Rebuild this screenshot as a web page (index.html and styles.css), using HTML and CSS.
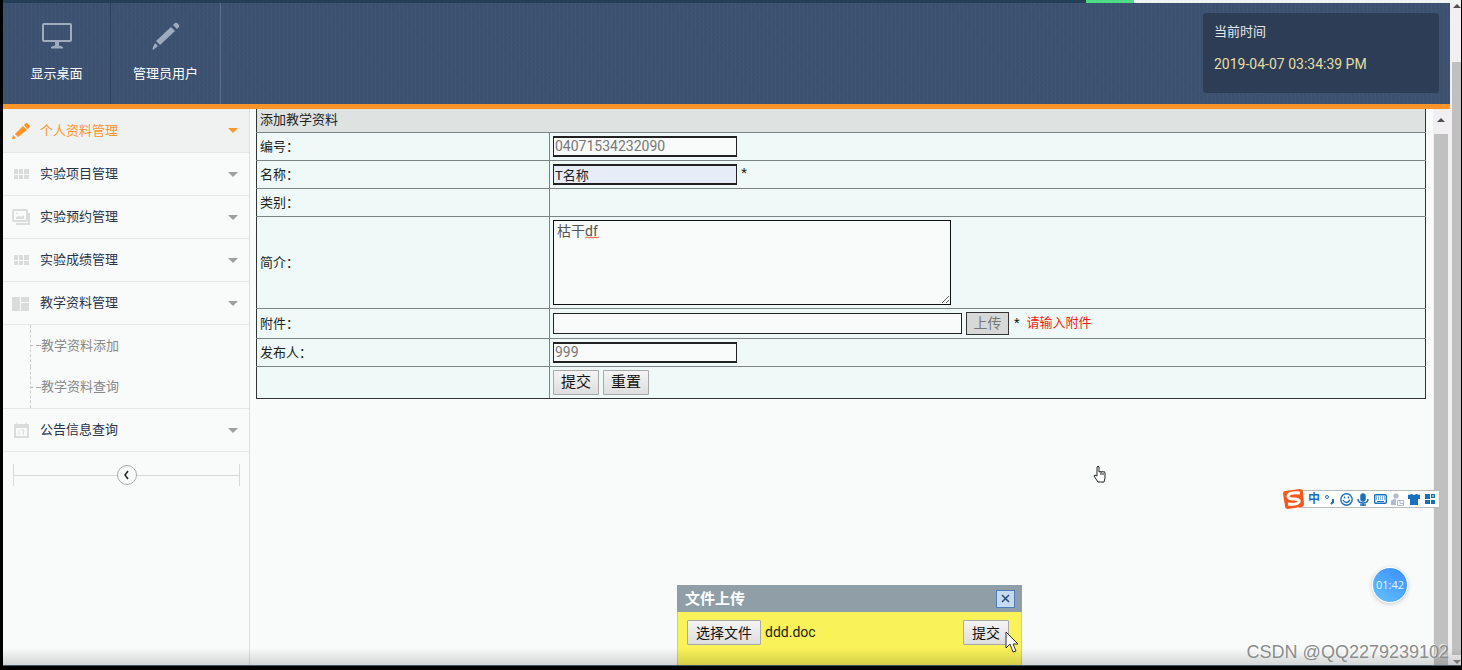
FILE: index.html
```html
<!DOCTYPE html>
<html lang="zh-CN">
<head>
<meta charset="utf-8">
<title>添加教学资料</title>
<link rel="stylesheet" href="styles.css">
</head>
<body>
<div class="screen">
  <div class="strip"><i class="strip-tab"></i><i class="strip-rest"></i></div>
  <div class="window">
    <div class="page">
      <header class="top">
        <nav class="tools">
          <a class="tool" href="#">
            <svg width="30" height="28" viewBox="0 0 30 28" fill="none" stroke="currentColor" stroke-width="2"><rect x="1" y="2" width="28" height="17" rx="1"/><path d="M15 20v4" stroke-width="4"/><path d="M9 26q0-2 6-2t6 2z" fill="currentColor" stroke-width="1"/></svg>
            <span>显示桌面</span>
          </a>
          <a class="tool" href="#">
            <svg width="28" height="28" viewBox="0 0 28 28" fill="currentColor"><path d="M21 3l2-2q2-1 3 1 2 1 1 3l-2 2zM19 5l4 4L8 23l-4-4zM3 21l3 3-5 4q-1-1 0-3z"/></svg>
            <span>管理员用户</span>
          </a>
        </nav>
        <div class="clock"><span>当前时间</span><time>2019-04-07 03:34:39 PM</time></div>
      </header>
      <div class="body">
        <aside class="side">
          <a class="item active" href="#"><svg class="ic" width="18" height="18" viewBox="0 0 18 18" fill="currentColor"><path d="M12 3l2-2h1l3 3-1 2-2 1zM11 4l4 4-9 7-3-3zM1 13l3 3-2 1-2 0z"/></svg><span>个人资料管理</span><i class="caret"></i></a>
          <a class="item" href="#"><svg class="ic" width="18" height="18" viewBox="0 0 18 18" fill="currentColor"><path d="M2 4h4v5H2zM7 4h4v5H7zM12 4h5v5h-5zM2 10h4v4H2zM7 10h4v4H7zM12 10h5v4h-5z"/></svg><span>实验项目管理</span><i class="caret"></i></a>
          <a class="item" href="#"><svg class="ic" width="18" height="18" viewBox="0 0 18 18" fill="none" stroke="currentColor" stroke-width="2"><rect x="1" y="2" width="14" height="11" rx="1"/><path d="M4 16h13V5"/><path d="M4 11V9l3-1 2 1 3-2v4zM4 5h2v1H4z" fill="currentColor" stroke="none"/></svg><span>实验预约管理</span><i class="caret"></i></a>
          <a class="item" href="#"><svg class="ic" width="18" height="18" viewBox="0 0 18 18" fill="currentColor"><path d="M2 4h4v5H2zM7 4h4v5H7zM12 4h5v5h-5zM2 10h4v4H2zM7 10h4v4H7zM12 10h5v4h-5z"/></svg><span>实验成绩管理</span><i class="caret"></i></a>
          <a class="item" href="#"><svg class="ic" width="18" height="18" viewBox="0 0 18 18" fill="currentColor"><path d="M0 3h8v14H0zM9 3h8v5H9zM9 9h8v8H9z"/></svg><span>教学资料管理</span><i class="caret"></i></a>
          <div class="sub"><a href="#">教学资料添加</a><a href="#">教学资料查询</a></div>
          <a class="item" href="#"><svg class="ic" width="18" height="18" viewBox="0 0 18 18"><path d="M2 3h15v4H2z" fill="currentColor"/><path d="M3 7v9h13V7" fill="none" stroke="currentColor" stroke-width="2"/><path d="M7 9v5M9 9h3l-1 5M5 1v3M14 1v3" fill="none" stroke="currentColor"/></svg><span>公告信息查询</span><i class="caret"></i></a>
          <div class="fold"><button type="button" aria-label="收起"><svg width="8" height="10" viewBox="0 0 8 10" fill="none" stroke="#222" stroke-width="1.5"><path d="M5 1L2 5l3 4"/></svg></button></div>
        </aside>
        <main class="main">
          <form>
            <table class="form">
              <colgroup><col class="c1"><col></colgroup>
              <tr class="head"><th colspan="2">添加教学资料</th></tr>
              <tr><td><label for="no">编号<span class="colon">：</span></label></td><td><input id="no" class="txt gray" value="04071534232090"></td></tr>
              <tr><td><label for="name">名称<span class="colon">：</span></label></td><td><input id="name" class="txt filled" value="T名称"> <span class="star">*</span></td></tr>
              <tr><td>类别<span class="colon">：</span></td><td></td></tr>
              <tr class="tall"><td><label for="intro">简介<span class="colon">：</span></label></td><td><div class="area"><textarea id="intro">枯干df</textarea><svg class="wavy" width="14" height="3" viewBox="0 0 14 3" fill="none" stroke="#f0583c"><path d="M0 2l2-1 2 1 2-1 2 1 2-1 2 1 2-1"/></svg></div></td></tr>
              <tr class="r30"><td><label for="file">附件<span class="colon">：</span></label></td><td><div class="line"><input id="file" class="txt wide"><button type="button" class="up">上传</button><span class="star">*</span><span class="err">请输入附件</span></div></td></tr>
              <tr><td><label for="by">发布人<span class="colon">：</span></label></td><td><input id="by" class="txt gray" value="999"></td></tr>
              <tr class="r32"><td></td><td><div class="line"><button type="button" class="btn">提交</button><button type="reset" class="btn">重置</button></div></td></tr>
            </table>
          </form>
        </main>
        <div class="bar inner"><i class="up-arrow"></i><i class="thumb"></i></div>
      </div>
    </div>
    <div class="bar outer"><i class="up-arrow"></i><i class="thumb"></i><i class="down-arrow"></i></div>
  </div>
  <div class="shade"></div>

  <section class="dialog">
    <header><h2>文件上传</h2><button type="button" aria-label="关闭"><svg width="9" height="9" viewBox="0 0 9 9" stroke="#264b7c" stroke-width="1.500"><path d="M1 1l7 7M8 1L1 8"/></svg></button></header>
    <div class="dialog-body"><button type="button" class="btn">选择文件</button><span>ddd.doc</span><button type="button" class="btn send">提交</button></div>
  </section>
  <svg class="pointer" width="13" height="22" viewBox="0 0 13 22" fill="#fff" stroke="#333"><path d="M1 1v16l4-4 3 8 3-1-3-7h5z"/></svg>
  <svg class="hand" width="14" height="18" viewBox="0 0 14 18" fill="#fff" stroke="#222"><path d="M4 11V2q1-2 2 0v5q1-1 2 0 1-1 2 0 2-1 2 1v5l-1 4H5L1 11q0-2 3 0M8 7v3M10 8v2"/></svg>

  <div class="ime">
    <svg class="sogou" width="24" height="22" viewBox="0 0 24 22"><path d="M3 3l15-2q3 0 3 3l1 12q0 3-3 3L6 21q-3 0-3-3L1 6q0-3 2-3z" fill="#f4581f"/><path d="M18 5Q7 4 6 8q0 3 6 3 6 0 5 3-2 3-11 2" fill="none" stroke="#fff" stroke-width="3"/></svg>
    <div class="ime-row">
      <b>中</b>
      <svg width="12" height="12" viewBox="0 0 12 12" fill="none" stroke="#1b70bd"><circle cx="3" cy="4" r="1.5"/><path d="M8 7h1v2L7 11" stroke-width="2"/></svg>
      <svg width="13" height="13" viewBox="0 0 13 13" fill="none" stroke="#1b70bd" stroke-width="1.4"><circle cx="6.5" cy="6.5" r="5.7"/><path d="M4.5 3.5v2M8.5 3.5v2M3 7q3 5 7 0"/></svg>
      <svg width="12" height="13" viewBox="0 0 12 13" fill="none" stroke="#1b70bd" stroke-width="1.5"><rect x="4" y="1" width="4" height="7" rx="2" fill="#1b70bd"/><path d="M1 6q0 4 5 4t5-4M6 10v3M3 12h6"/></svg>
      <svg width="13" height="10" viewBox="0 0 13 10" fill="none" stroke="#1b70bd"><rect x=".7" y=".7" width="11.6" height="8.6" rx="1" stroke-width="1.4"/><path d="M2 3h9M2 5h9" stroke-dasharray="1 1"/><path d="M3 7.5h7"/></svg>
      <svg width="13" height="13" viewBox="0 0 13 13" fill="#aebccd"><circle cx="5" cy="3" r="2.6"/><path d="M0 12V8q1-2 5-2v6z"/><path d="M6.5 7.5h6v5h-6zM9 7.5v3h3" fill="#fff" stroke="#aebccd"/></svg>
      <svg width="12" height="12" viewBox="0 0 12 12" fill="#1b70bd"><path d="M0 2l4-1q2 2 4 0l4 1v4h-2v6H2V6H0z"/></svg>
      <svg width="12" height="12" viewBox="0 0 12 12" fill="#1b70bd"><path d="M1 1h5v5H1zM7 1h4v4H7zM1 7h5v4H1zM7 7h4v4H7z"/><path d="M8 2h2v2H8z" fill="#8bb8e0"/></svg>
    </div>
  </div>
  <div class="bubble">01:42</div>
  <div class="mark">CSDN @QQ2279239102</div>
</div>
</body>
</html>
```
FILE: styles.css
```css
* { box-sizing: border-box; }
body {
  margin: 0;
  background: #000;
  font: 13px/20px Roboto, "Noto Sans CJK SC", sans-serif;
  color: #333;
}
a { color: inherit; text-decoration: none; }
button, input, textarea { font-family: inherit; margin: 0; border-radius: 0; }
.screen {
  position: relative;
  display: flex;
  flex-direction: column;
  min-height: 100vh;
  padding: 0 1px 4px 3px;
  overflow: hidden;
}
.strip { display: flex; height: 3px; background: #263f58; }
.strip-tab { width: 48px; margin-left: 74.3%; background: #4fdc86; }
.strip-rest { flex: 1; background: #eef5f2; }
.window { flex: 1; display: flex; }
.page { flex: 1; display: flex; flex-direction: column; min-width: 0; background: #f9fbfa; }

.top {
  display: flex;
  justify-content: space-between;
  align-items: flex-start;
  height: 106px;
  border-bottom: 5px solid #ff9429;
  background:
    repeating-linear-gradient(45deg, #36496a44 0 1px, transparent 1px 3px),
    repeating-linear-gradient(90deg, #49607c44 0 1px, transparent 1px 4px),
    #3d5270;
}
.tools { display: flex; height: 100%; }
.tool {
  display: flex;
  flex-direction: column;
  align-items: center;
  gap: 14px;
  width: 110px;
  padding-top: 19px;
  border-right: 1px solid #5b708e;
  color: #fff;
}
.tool:first-child { width: 108px; border-color: #2b405e; }
.tool svg { color: #9eacbf; }
.clock {
  display: flex;
  flex-direction: column;
  gap: 12px;
  width: 236px;
  height: 80px;
  margin: 10px 11px 0 0;
  padding: 9px 11px;
  border-radius: 3px;
  background: #2d3d56;
  color: #e4eaec;
}
.clock time { color: #e5dda5; font-size: 14px; }

.body { flex: 1; display: flex; min-height: 0; }
.side { width: 247px; border-right: 1px solid #dcdfde; }
.item {
  display: flex;
  align-items: center;
  height: 43px;
  padding: 0 11px 0 9px;
  border-bottom: 1px solid #e5e8e7;
  color: #29334a;
}
.item span { flex: 1; margin-left: 10px; }
.ic { color: #d9dcdb; }
.item.active { height: 44px; background: #eff2f1; color: #ff9429; }
.active .ic { color: inherit; }
.caret { border: 5px solid transparent; border-top-color: #9da09f; border-bottom: 0; }
.active .caret { border-top-color: #ff9429; }
.sub {
  display: flex;
  flex-direction: column;
  height: 84px;
  padding-left: 27px;
  border-bottom: 1px solid #e5e8e7;
  color: #888;
}
.sub a {
  display: flex;
  align-items: center;
  height: 42px;
  border-left: 1px dashed #ccc;
}
.sub a::before {
  content: "";
  width: 10px;
  height: 1px;
  background: linear-gradient(90deg, #bbb 0 2px, transparent 2px 5px, #aaa 5px);
}
.fold {
  display: flex;
  align-items: center;
  justify-content: center;
  height: 22px;
  margin: 12px 9px 0 10px;
  border: solid #d7dad9;
  border-width: 0 1px;
  background: linear-gradient(#d7dad9, #d7dad9) center / 100% 1px no-repeat;
}
.fold button {
  display: grid;
  place-items: center;
  width: 20px;
  height: 20px;
  padding: 0;
  border: 1px solid #aaa;
  border-radius: 50%;
  background: #f9fbfa;
}

.main { flex: 1; min-width: 0; padding: 0 7px 0 6px; }
.form {
  width: 100%;
  table-layout: fixed;
  border-collapse: collapse;
  border: 1px solid #303433;
  border-top: 0;
  background: #effaf8;
  color: #222;
}
.c1 { width: 293px; }
.form td, .form th { height: 28px; padding: 0 3px; border: 1px solid #7c8483; }
.form th { height: 23px; border-top: 0; background: #dee2e0; font-weight: 400; text-align: left; }
.form .tall td { height: 92px; }
.form .r30 td { height: 30px; }
.form .r32 td { height: 32px; }
.form .r32 td { border-bottom-color: #303433; }
.form td:first-child, .form th { border-left-color: #303433; }
.form td:last-child, .form th { border-right-color: #303433; }
.colon { font-family: "Noto Sans CJK TC", sans-serif; }
.txt {
  width: 184px;
  height: 21px;
  padding: 0 1px;
  border: 2px solid #222;
  border-width: 2px 1px;
  background: #f9fbfa;
  color: #222;
  font-size: 14px;
  vertical-align: middle;
}
.txt.gray { color: #777; }
.txt.filled { background: #e6edf8; font-size: 13px; }
.txt.wide { width: 409px; border-width: 1px; }
.area { position: relative; display: flex; }
.area textarea {
  width: 398px;
  height: 85px;
  padding: 0 3px;
  border: 1px solid #111;
  background: #f9fbfa;
  color: #555;
  font-size: 14px;
  line-height: 20px;
}
.wavy { position: absolute; left: 32px; top: 16px; }
.line { display: flex; align-items: center; gap: 4px; }
.star { margin-left: 1px; }
.err { margin-left: 3px; color: #f31b10; }
.up {
  width: 43px;
  height: 23px;
  padding: 0;
  border: 1px solid #333;
  background: #d6d9d7;
  color: #777;
  font-size: 14px;
  line-height: 20px;
}
.btn {
  height: 25px;
  padding: 0 7px;
  border: 1px solid #a7aaa9;
  border-radius: 1px;
  background: linear-gradient(#f4f4f4, #dedede);
  color: #111;
  font-size: 15px;
  line-height: 20px;
}

.bar { display: flex; flex-direction: column; background: #f1eff2; }
.inner { width: 17px; padding: 9px 2px 0 1px; }
.outer { width: 11px; padding: 1px 0 2px 2px; }
.bar .thumb { flex: 1; background: #c0c0c0; }
.up-arrow, .down-arrow { align-self: center; border: 4px solid transparent; }
.up-arrow { border-top: 0; border-bottom-color: #505050; }
.down-arrow { margin-top: 5px; border-bottom: 0; border-top-color: #888; }
.inner .thumb { margin-top: 12px; }
.outer .thumb { margin-top: 54px; }
.shade {
  position: absolute;
  left: 3px;
  right: 1px;
  bottom: 4px;
  height: 18px;
  border-bottom: 1px solid #425565;
  background: linear-gradient(transparent, #00000026);
  z-index: 3;
}

.dialog { position: absolute; left: 677px; bottom: 4px; width: 345px; z-index: 2; background: #f9f258; }
.dialog header {
  display: flex;
  align-items: center;
  justify-content: space-between;
  height: 27px;
  padding: 0 7px 0 8px;
  background: #8f9ea7;
  color: #fff;
}
.dialog h2 { margin: 0; font-size: 15px; line-height: 20px; }
.dialog header button {
  display: grid;
  place-items: center;
  width: 19px;
  height: 18px;
  padding: 0;
  border: 1px solid #4d7fc0;
  background: #c8daee;
}
.dialog-body {
  display: flex;
  align-items: flex-start;
  gap: 4px;
  height: 54px;
  padding: 8px 12px 0 9px;
  border: 1px solid #d1cd80;
  border-width: 0 1px;
  color: #222;
  font-size: 14px;
  line-height: 25px;
}
.dialog .btn { padding: 0 8px; font-size: 14px; }
.dialog .send { margin-left: auto; }
.pointer { position: absolute; left: 1005px; top: 631px; z-index: 4; }
.hand { position: absolute; left: 1093px; top: 465px; }

.ime { position: absolute; right: 22px; top: 488px; display: flex; align-items: center; }
.sogou { margin-right: -7px; z-index: 1; }
.ime-row {
  display: flex;
  align-items: center;
  justify-content: space-between;
  width: 141px;
  height: 18px;
  padding: 0 3px 0 8px;
  border: 1px solid #b8bcbc;
  background: #fff;
  color: #1b70bd;
  font-size: 12px;
}
.bubble {
  position: absolute;
  right: 54px;
  top: 567px;
  width: 36px;
  height: 36px;
  border: 1px solid #fff;
  border-radius: 50%;
  background: linear-gradient(35deg, #63c3ff, #3b8cff);
  box-shadow: 0 1px 4px #0003;
  color: #e7f5ff;
  font: 11px/34px "Open Sans", sans-serif;
  text-align: center;
}
.mark {
  position: absolute;
  right: 13px;
  bottom: 6px;
  z-index: 5;
  color: #8b8d8c;
  font: 18px/24px "Liberation Sans", sans-serif;
  text-shadow: -1px -1px 0 #ffffffb0;
}
```
